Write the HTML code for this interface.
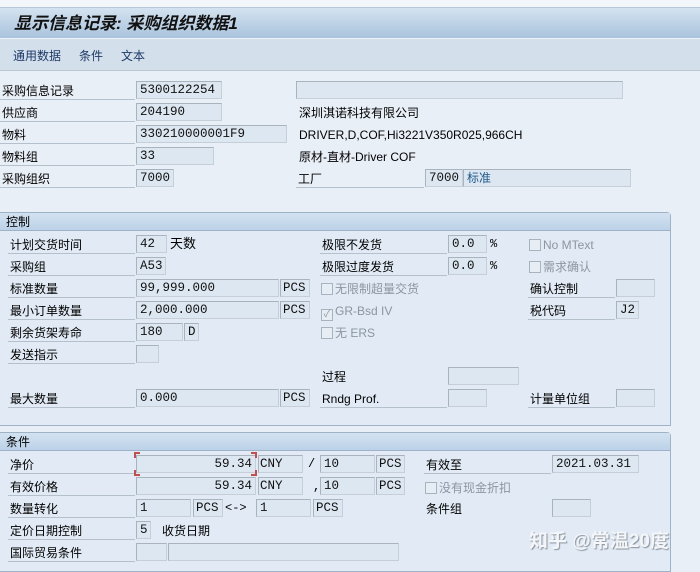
<!DOCTYPE html>
<html><head><meta charset="utf-8"><style>
*{margin:0;padding:0;box-sizing:border-box}
body{width:700px;height:569px;overflow:hidden;background:#e9eff7;font-family:"Liberation Sans","Noto Sans CJK SC",sans-serif;font-size:12px;color:#000;position:relative}
.a{position:absolute}
.t{position:absolute;height:18px;line-height:18px;white-space:nowrap}
.l{position:absolute;height:20px;line-height:22px;border-bottom:1px solid #b4c0cc;white-space:nowrap}
.f{position:absolute;height:18px;line-height:16px;background:#dde7f1;border:1px solid #a9b3bd;border-right-color:#c6cfd8;border-bottom-color:#c6cfd8;font-family:"Liberation Mono",monospace;font-size:12.5px;padding-left:3px;white-space:nowrap;color:#111}
.r{text-align:right;padding-right:3px}
.g{color:#8d96a0}
.cb{display:inline-block;width:12px;height:12px;border:1px solid #a9b3bd;background:#e6edf5;vertical-align:-2px;margin-right:2px;font-size:10px;line-height:10px;text-align:center;color:#8d96a0}
.box{position:absolute;left:0;width:671px;border:1px solid #9fb3c8;border-left:none;border-radius:0 4px 0 0;background:#e1eaf5}
.hd{height:18px;line-height:19px;padding-left:6px;background:linear-gradient(#d3e2f1,#bcd2e8);border-bottom:1px solid #9fb3c8}
.rb{position:absolute;background:#c0504d}
</style></head><body>
<div class="a" style="left:0;top:0;width:700px;height:7px;background:#f2f5f9"></div>
<div class="a" style="left:0;top:7px;width:700px;height:31px;background:linear-gradient(#d4e3f0,#a9c3dc);border-top:1px solid #b8c8d8"></div>
<div class="t" style="left:14px;top:13px;font-size:17px;font-weight:bold;font-style:italic;height:22px;line-height:22px;color:#111">显示信息记录: 采购组织数据1</div>
<div class="a" style="left:0;top:38px;width:700px;height:33px;background:#d3dfea;border-top:1px solid #eef3f8;border-bottom:1px solid #b9c6d3"></div>
<div class="t" style="left:13px;top:47px;color:#1e3a68">通用数据</div>
<div class="t" style="left:79px;top:47px;color:#1e3a68">条件</div>
<div class="t" style="left:121px;top:47px;color:#1e3a68">文本</div>

<div class="l" style="left:0;top:80px;width:135px;padding-left:2px">采购信息记录</div>
<div class="f" style="left:136px;top:81px;width:86px">5300122254</div>
<div class="f" style="left:296px;top:81px;width:327px"></div>
<div class="l" style="left:0;top:102px;width:135px;padding-left:2px">供应商</div>
<div class="f" style="left:136px;top:103px;width:86px">204190</div>
<div class="t" style="left:299px;top:104px">深圳淇诺科技有限公司</div>
<div class="l" style="left:0;top:124px;width:135px;padding-left:2px">物料</div>
<div class="f" style="left:136px;top:125px;width:151px">330210000001F9</div>
<div class="t" style="left:299px;top:126px">DRIVER,D,COF,Hi3221V350R025,966CH</div>
<div class="l" style="left:0;top:146px;width:135px;padding-left:2px">物料组</div>
<div class="f" style="left:136px;top:147px;width:78px">33</div>
<div class="t" style="left:299px;top:148px">原材-直材-Driver COF</div>
<div class="l" style="left:0;top:168px;width:135px;padding-left:2px">采购组织</div>
<div class="f" style="left:136px;top:169px;width:38px">7000</div>
<div class="l" style="left:296px;top:168px;width:128px;padding-left:2px">工厂</div>
<div class="f" style="left:425px;top:169px;width:38px">7000</div>
<div class="f" style="left:463px;top:169px;width:168px;font-family:'Liberation Sans','Noto Sans CJK SC',sans-serif;font-size:12px;color:#1f5a8a">标准</div>

<div class="box" style="top:212px;height:214px"><div class="hd">控制</div></div>
<div class="l" style="left:8px;top:234px;width:127px;padding-left:2px">计划交货时间</div>
<div class="f" style="left:136px;top:235px;width:31px">42</div>
<div class="t" style="left:170px;top:235px;font-size:13px">天数</div>
<div class="l" style="left:8px;top:256px;width:127px;padding-left:2px">采购组</div>
<div class="f" style="left:136px;top:257px;width:30px">A53</div>
<div class="l" style="left:8px;top:278px;width:127px;padding-left:2px">标准数量</div>
<div class="f" style="left:136px;top:279px;width:143px">99,999.000</div>
<div class="f" style="left:280px;top:279px;width:30px;padding-left:2px">PCS</div>
<div class="l" style="left:8px;top:300px;width:127px;padding-left:2px">最小订单数量</div>
<div class="f" style="left:136px;top:301px;width:143px">2,000.000</div>
<div class="f" style="left:280px;top:301px;width:30px;padding-left:2px">PCS</div>
<div class="l" style="left:8px;top:322px;width:127px;padding-left:2px">剩余货架寿命</div>
<div class="f" style="left:136px;top:323px;width:47px">180</div>
<div class="f" style="left:184px;top:323px;width:15px">D</div>
<div class="l" style="left:8px;top:344px;width:127px;padding-left:2px">发送指示</div>
<div class="f" style="left:136px;top:345px;width:23px"></div>
<div class="l" style="left:8px;top:388px;width:127px;padding-left:2px">最大数量</div>
<div class="f" style="left:136px;top:389px;width:143px">0.000</div>
<div class="f" style="left:280px;top:389px;width:30px;padding-left:2px">PCS</div>

<div class="l" style="left:320px;top:234px;width:127px;padding-left:2px">极限不发货</div>
<div class="f" style="left:448px;top:235px;width:39px">0.0</div>
<div class="t" style="left:490px;top:235px;font-family:'Liberation Mono',monospace">%</div>
<div class="l" style="left:320px;top:256px;width:127px;padding-left:2px">极限过度发货</div>
<div class="f" style="left:448px;top:257px;width:39px">0.0</div>
<div class="t" style="left:490px;top:257px;font-family:'Liberation Mono',monospace">%</div>
<div class="t g" style="left:321px;top:280px"><span class="cb"></span>无限制超量交货</div>
<div class="t g" style="left:321px;top:302px"><span class="cb">✓</span>GR-Bsd IV</div>
<div class="t g" style="left:321px;top:324px"><span class="cb"></span>无 ERS</div>
<div class="l" style="left:320px;top:366px;width:127px;padding-left:2px;border-bottom:none">过程</div>
<div class="f" style="left:448px;top:367px;width:71px"></div>
<div class="l" style="left:320px;top:388px;width:127px;padding-left:2px">Rndg Prof.</div>
<div class="f" style="left:448px;top:389px;width:39px"></div>

<div class="t g" style="left:529px;top:236px"><span class="cb"></span>No MText</div>
<div class="t g" style="left:529px;top:258px"><span class="cb"></span>需求确认</div>
<div class="l" style="left:528px;top:278px;width:87px;padding-left:2px">确认控制</div>
<div class="f" style="left:616px;top:279px;width:39px"></div>
<div class="l" style="left:528px;top:300px;width:87px;padding-left:2px">税代码</div>
<div class="f" style="left:616px;top:301px;width:23px">J2</div>
<div class="l" style="left:528px;top:388px;width:87px;padding-left:2px">计量单位组</div>
<div class="f" style="left:616px;top:389px;width:39px"></div>

<div class="box" style="top:432px;height:140px"><div class="hd">条件</div></div>
<div class="l" style="left:8px;top:454px;width:127px;padding-left:2px">净价</div>
<div class="f r" style="left:136px;top:455px;width:120px">59.34</div>
<div class="rb" style="left:134px;top:452px;width:6px;height:2px"></div>
<div class="rb" style="left:134px;top:452px;width:2px;height:6px"></div>
<div class="rb" style="left:134px;top:474px;width:6px;height:2px"></div>
<div class="rb" style="left:134px;top:470px;width:2px;height:6px"></div>
<div class="rb" style="left:251px;top:452px;width:6px;height:2px"></div>
<div class="rb" style="left:255px;top:452px;width:2px;height:6px"></div>
<div class="rb" style="left:251px;top:474px;width:6px;height:2px"></div>
<div class="rb" style="left:255px;top:470px;width:2px;height:6px"></div>
<div class="f" style="left:258px;top:455px;width:45px;padding-left:1px">CNY</div>
<div class="t" style="left:308px;top:455px;font-family:'Liberation Mono',monospace">/</div>
<div class="f" style="left:320px;top:455px;width:55px">10</div>
<div class="f" style="left:376px;top:455px;width:29px;padding-left:2px">PCS</div>
<div class="l" style="left:424px;top:454px;width:127px;padding-left:2px">有效至</div>
<div class="f" style="left:552px;top:455px;width:87px">2021.03.31</div>

<div class="l" style="left:8px;top:476px;width:127px;padding-left:2px">有效价格</div>
<div class="f r" style="left:136px;top:477px;width:120px">59.34</div>
<div class="f" style="left:258px;top:477px;width:45px;padding-left:1px">CNY</div>
<div class="t" style="left:313px;top:478px;font-family:'Liberation Mono',monospace">,</div>
<div class="f" style="left:320px;top:477px;width:55px">10</div>
<div class="f" style="left:376px;top:477px;width:29px;padding-left:2px">PCS</div>
<div class="t g" style="left:425px;top:479px"><span class="cb"></span>没有现金折扣</div>

<div class="l" style="left:8px;top:498px;width:127px;padding-left:2px">数量转化</div>
<div class="f" style="left:136px;top:499px;width:55px">1</div>
<div class="f" style="left:193px;top:499px;width:30px;padding-left:2px">PCS</div>
<div class="t" style="left:225px;top:499px;font-family:'Liberation Mono',monospace">&lt;-&gt;</div>
<div class="f" style="left:256px;top:499px;width:55px">1</div>
<div class="f" style="left:313px;top:499px;width:30px;padding-left:2px">PCS</div>
<div class="l" style="left:424px;top:498px;width:127px;padding-left:2px;border-bottom:none">条件组</div>
<div class="f" style="left:552px;top:499px;width:39px"></div>

<div class="l" style="left:8px;top:520px;width:127px;padding-left:2px">定价日期控制</div>
<div class="f" style="left:136px;top:521px;width:15px">5</div>
<div class="t" style="left:162px;top:522px">收货日期</div>
<div class="l" style="left:8px;top:542px;width:127px;padding-left:2px">国际贸易条件</div>
<div class="f" style="left:136px;top:543px;width:31px"></div>
<div class="f" style="left:168px;top:543px;width:231px"></div>

<div class="t" style="left:529px;top:529px;height:26px;line-height:26px;font-size:19px;font-weight:bold;color:#f4f6f9;text-shadow:1px 1px 1px #8a939c">知乎 @常温20度</div>
</body></html>
